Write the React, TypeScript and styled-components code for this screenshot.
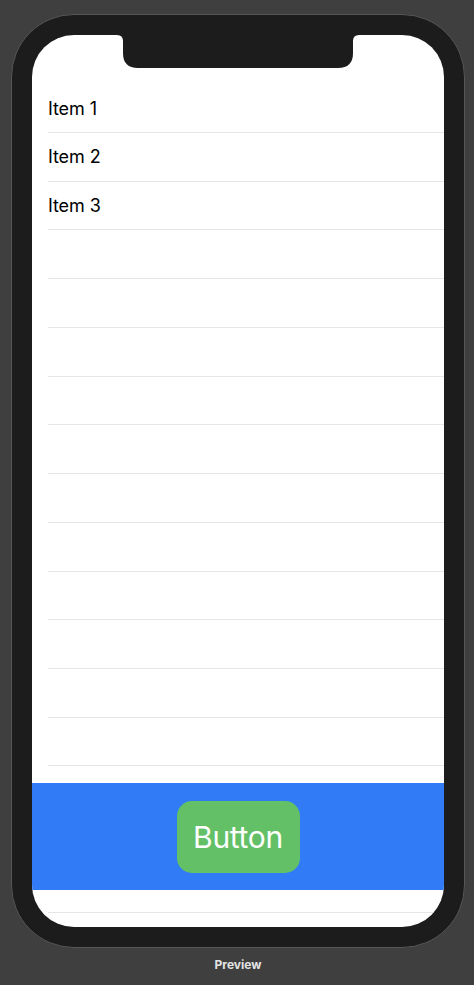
import styled, { createGlobalStyle } from "styled-components"

const GlobalStyle = createGlobalStyle`
  html, body {
    margin: 0;
    padding: 0;
    background: #3f3f3f;
  }

  body {
    min-height: 100vh;
    font-family: Inter, "Noto Sans", "Liberation Sans", sans-serif;
  }
`

const items = ["Item 1", "Item 2", "Item 3"]
const rowCount = 18

const Notch = () => (
  <NotchShape width="242" height="33" viewBox="0 0 242 33">
    <path
      d="M0 0 H242 Q236 0 236 6 V18 Q236 33 221 33 H21 Q6 33 6 18 V6 Q6 0 0 0 Z"
      fill="#1c1c1c"
    />
  </NotchShape>
)

const App = () => {
  const rows = Array.from({ length: rowCount }, (_, i) => items[i] ?? "")

  return (
    <>
      <GlobalStyle />
      <Stage>
        <Phone>
          <Screen>
            <Notch />
            <List>
              {rows.map((label, i) => (
                <Row key={i}>
                  <RowLabel>{label}</RowLabel>
                </Row>
              ))}
            </List>
            <BottomBar>
              <ActionButton>Button</ActionButton>
            </BottomBar>
          </Screen>
        </Phone>
        <Caption>Preview</Caption>
      </Stage>
    </>
  )
}

const Stage = styled.div`
  display: flex;
  flex-direction: column;
  align-items: center;
  padding: 14px 9px 0 11px;
`

const Phone = styled.div`
  box-sizing: border-box;
  width: 454px;
  height: 934px;
  padding: 20px;
  border: 1px solid #565656;
  border-radius: 63px;
  background: #1c1c1c;
`

const Screen = styled.div`
  position: relative;
  height: 100%;
  overflow: hidden;
  border-radius: 42px;
  background: #ffffff;
`

const NotchShape = styled.svg`
  position: absolute;
  top: 0;
  left: 50%;
  transform: translateX(-50%);
  display: block;
  z-index: 2;
`

const List = styled.div`
  display: flex;
  flex-direction: column;
  padding-top: 49.2px;
`

const Row = styled.div`
  box-sizing: border-box;
  display: flex;
  align-items: center;
  flex-shrink: 0;
  height: 48.74px;
  margin-left: 16px;
  border-bottom: 1px solid #e6e6e8;
`

const RowLabel = styled.span`
  font-size: 18px;
  color: #000000;
  letter-spacing: -0.1px;
`

const BottomBar = styled.div`
  position: absolute;
  left: 0;
  right: 0;
  bottom: 37px;
  height: 107px;
  display: flex;
  align-items: center;
  justify-content: center;
  background: #317bf6;
`

const ActionButton = styled.button`
  box-sizing: border-box;
  width: 123px;
  height: 72px;
  padding: 0;
  border: none;
  border-radius: 15px;
  background: #64c067;
  color: #ffffff;
  font-family: Inter, "Noto Sans", "Liberation Sans", sans-serif;
  font-size: 30px;
  font-weight: 400;
  letter-spacing: -0.3px;
`

const Caption = styled.div`
  margin-top: 9px;
  font-size: 12px;
  line-height: 16px;
  font-weight: 700;
  color: #e4e4e4;
`

export default App
